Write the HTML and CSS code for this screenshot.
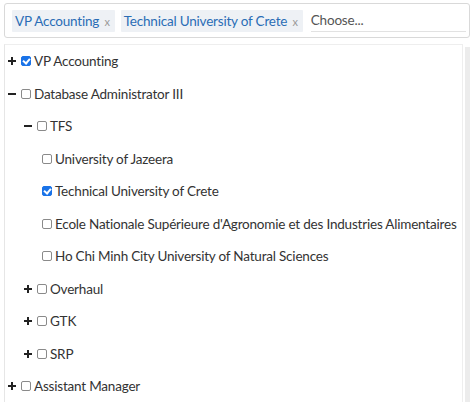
FILE: index.html
```html
<!DOCTYPE html>
<html>
<head>
<meta charset="utf-8">
<link rel="stylesheet" href="styles.css">
</head>
<body>
<div class="picker">
  <span class="tag">VP Accounting <span class="x">x</span></span>
  <span class="tag">Technical University of Crete <span class="x">x</span></span>
  <span class="search">Choose...</span>
</div>
<div class="panel">
  <ul class="tree">
    <li class="row lvl0"><span class="tog plus"></span><span class="cb on"></span><span class="lbl">VP Accounting</span></li>
    <li class="row lvl0"><span class="tog minus"></span><span class="cb"></span><span class="lbl">Database Administrator III</span></li>
    <li class="row lvl1"><span class="tog minus"></span><span class="cb"></span><span class="lbl">TFS</span></li>
    <li class="row leaf"><span class="cb"></span><span class="lbl">University of Jazeera</span></li>
    <li class="row leaf"><span class="cb on"></span><span class="lbl">Technical University of Crete</span></li>
    <li class="row leaf"><span class="cb"></span><span class="lbl">Ecole Nationale Supérieure d'Agronomie et des Industries Alimentaires</span></li>
    <li class="row leaf"><span class="cb"></span><span class="lbl">Ho Chi Minh City University of Natural Sciences</span></li>
    <li class="row lvl1"><span class="tog plus"></span><span class="cb"></span><span class="lbl">Overhaul</span></li>
    <li class="row lvl1"><span class="tog plus"></span><span class="cb"></span><span class="lbl">GTK</span></li>
    <li class="row lvl1"><span class="tog plus"></span><span class="cb"></span><span class="lbl">SRP</span></li>
    <li class="row lvl0"><span class="tog plus"></span><span class="cb"></span><span class="lbl">Assistant Manager</span></li>
  </ul>
  <div class="scroll"></div>
</div>
</body>
</html>
```
FILE: styles.css
```css
* { box-sizing: border-box; }
html, body { margin: 0; padding: 0; background: #fff; overflow: hidden; }
body {
  font-family: "Lato", "Open Sans", sans-serif;
  font-size: 13.5px;
  letter-spacing: -0.2px;
  color: #333;
  width: 474px;
  height: 402px;
  padding: 3px 4px 0 4px;
}
.picker {
  height: 35px;
  border: 1px solid #d9d9d9;
  border-radius: 3px;
  display: flex;
  align-items: center;
  gap: 6px;
  padding: 0 3px 0 7px;
}
.tag {
  height: 22px;
  line-height: 22px;
  background: #eef1f5;
  color: #2a6db5;
  padding: 0 5px 0 3px;
  white-space: nowrap;
  border-radius: 1px;
}
.tag .x { color: #999; font-size: 11px; margin-left: 2px; }
.search {
  flex: 1;
  margin-left: 2px;
  height: 22px;
  line-height: 20px;
  color: #555;
  border-bottom: 1px solid #e2e2e2;
}
.panel {
  margin-top: 6px;
  display: flex;
  gap: 2px;
  height: 362px;
  overflow: hidden;
}
.tree {
  list-style: none;
  margin: 0;
  padding: 0;
  flex: 1;
  min-width: 0;
  border-left: 1px solid #e6e6e6;
  border-top: 1px solid #eee;
  border-right: 1px solid #eee;
}
.scroll {
  width: 5px;
  margin-top: 3px;
  background: #ececec;
}
.row {
  display: flex;
  align-items: center;
  height: 32.5px;
  white-space: nowrap;
}
.lvl0 { padding-left: 3px; }
.lvl1 { padding-left: 19px; }
.leaf { padding-left: 37px; }
.tog {
  flex: none;
  width: 8px;
  height: 8px;
  margin-right: 5px;
  position: relative;
}
.tog::before, .tog::after {
  content: "";
  position: absolute;
  background: #222;
}
.tog::before { left: 0; top: 3px; width: 8px; height: 2px; }
.plus::after { left: 3px; top: 0; width: 2px; height: 8px; }
.cb {
  flex: none;
  width: 10px;
  height: 10px;
  border: 1px solid #8a8a8a;
  border-radius: 2px;
  margin-right: 3px;
  position: relative;
  background: #fff;
}
.cb.on {
  background: #1a73e8;
  border-color: #1a73e8;
}
.cb.on::after {
  content: "";
  position: absolute;
  left: 2px;
  top: 0px;
  width: 3px;
  height: 5px;
  border-right: 2px solid #fff;
  border-bottom: 2px solid #fff;
  transform: rotate(40deg);
}
.lbl { line-height: 20px; color: #333; }
```
